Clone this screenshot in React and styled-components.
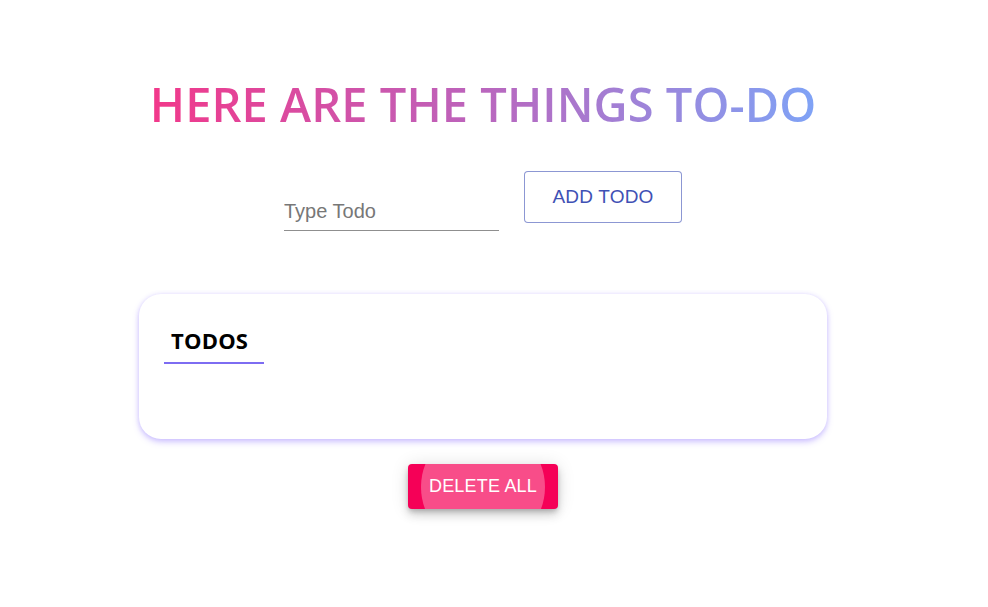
import React from "react";
import styled, { createGlobalStyle } from "styled-components";

const Global = createGlobalStyle`
  html, body { margin: 0; padding: 0; background: #fff; }
  body { font-family: "Open Sans", "Noto Sans", sans-serif; }
`;

const Page = styled.div`
  width: 966px;
  display: flex;
  flex-direction: column;
  align-items: center;
  padding-top: 72px;
  padding-bottom: 80px;
`;

const Title = styled.h1`
  margin: 0;
  font-family: "Open Sans", sans-serif;
  font-weight: 600;
  font-size: 47px;
  line-height: 64px;
  letter-spacing: 0.05px;
  background: linear-gradient(90deg, #f2388a 0%, #c060b8 45%, #7fa3f6 100%);
  -webkit-background-clip: text;
  background-clip: text;
  color: transparent;
`;

const Form = styled.div`
  display: flex;
  align-items: flex-start;
  gap: 25px;
  margin-top: 35px;
`;

const Field = styled.div`
  width: 215px;
  padding-top: 29px;
  border-bottom: 1px solid #8f8f8f;
`;

const Input = styled.input`
  width: 100%;
  box-sizing: border-box;
  border: none;
  outline: none;
  padding: 0 0 7px;
  font-family: "Liberation Sans", Arial, sans-serif;
  font-size: 20px;
  color: #333;
  background: transparent;
  &::placeholder { color: #777; }
`;

const OutlinedButton = styled.button`
  width: 158px;
  height: 52px;
  border: 1px solid rgba(63, 81, 181, 0.6);
  border-radius: 4px;
  background: #fff;
  color: #3f51b5;
  font-family: "Liberation Sans", Arial, sans-serif;
  font-size: 19px;
  letter-spacing: 0.2px;
  cursor: pointer;
`;

const Card = styled.div`
  box-sizing: border-box;
  width: 688px;
  height: 145px;
  margin-top: 63px;
  border-radius: 22px;
  background: #fff;
  box-shadow: 0 3px 6px rgba(124, 92, 255, 0.35), 0 0 4px rgba(124, 92, 255, 0.15);
  padding: 28px 25px;
`;

const CardHeading = styled.h2`
  margin: 0;
  width: 100px;
  box-sizing: border-box;
  padding-left: 7px;
  padding-bottom: 4px;
  border-bottom: 2px solid #7d6cf2;
  font-family: "Open Sans", sans-serif;
  font-weight: 700;
  font-size: 22px;
  line-height: 36px;
  letter-spacing: 0.2px;
  color: #000;
`;

const DeleteButton = styled.button`
  position: relative;
  overflow: hidden;
  margin-top: 25px;
  width: 150px;
  height: 45px;
  border: none;
  border-radius: 4px;
  background: #f50057;
  color: #fff;
  font-family: "Liberation Sans", Arial, sans-serif;
  font-size: 18px;
  letter-spacing: 0.2px;
  box-shadow: 0 3px 5px -1px rgba(0,0,0,0.2), 0 6px 10px 0 rgba(0,0,0,0.14), 0 1px 18px 0 rgba(0,0,0,0.12);
  cursor: pointer;
`;

const Ripple = styled.span`
  position: absolute;
  left: 50%;
  top: 50%;
  width: 124px;
  height: 124px;
  transform: translate(-50%, -50%);
  border-radius: 50%;
  background: rgba(255, 255, 255, 0.3);
`;

const Label = styled.span`
  position: relative;
`;

export default function App() {
  return (
    <>
      <Global />
      <Page>
        <Title>HERE ARE THE THINGS TO-DO</Title>
        <Form>
          <Field>
            <Input placeholder="Type Todo" />
          </Field>
          <OutlinedButton>ADD TODO</OutlinedButton>
        </Form>
        <Card>
          <CardHeading>TODOS</CardHeading>
        </Card>
        <DeleteButton>
          <Ripple />
          <Label>DELETE ALL</Label>
        </DeleteButton>
      </Page>
    </>
  );
}
